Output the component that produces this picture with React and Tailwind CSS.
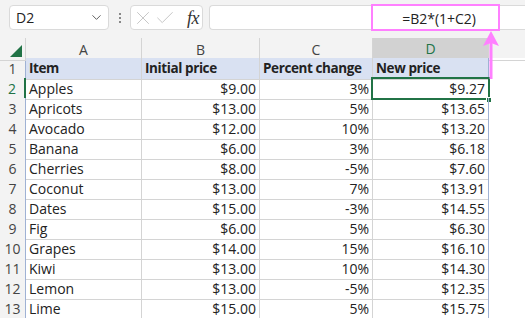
import { ChevronDown, X, Check } from 'lucide-react';

const rows = [
  ['Apples', '$9.00', '3%', '$9.27'],
  ['Apricots', '$13.00', '5%', '$13.65'],
  ['Avocado', '$12.00', '10%', '$13.20'],
  ['Banana', '$6.00', '3%', '$6.18'],
  ['Cherries', '$8.00', '-5%', '$7.60'],
  ['Coconut', '$13.00', '7%', '$13.91'],
  ['Dates', '$15.00', '-3%', '$14.55'],
  ['Fig', '$6.00', '5%', '$6.30'],
  ['Grapes', '$14.00', '15%', '$16.10'],
  ['Kiwi', '$13.00', '10%', '$14.30'],
  ['Lemon', '$13.00', '-5%', '$12.35'],
  ['Lime', '$15.00', '5%', '$15.75'],
];

const cols = 'grid grid-cols-[26px_116px_118px_113px_116px_1fr]';
const head = 'flex items-center pl-[3px] font-bold tracking-[-0.4px] text-[13.5px] bg-[#d9e1f2] border-b border-[#d4d4d4]';

const App = () => {
  return (
    <div className="relative w-[525px] h-[318px] overflow-hidden bg-white text-[14px] text-[#222] font-['Segoe_UI','Open_Sans','Noto_Sans',sans-serif]">
      {/* formula bar */}
      <div className="h-[38px] bg-[#f3f3f3] flex items-start pt-[5px] pl-[9px]">
        <div className="w-[100px] h-[25px] bg-white border border-[#dadada] rounded-[4px] flex items-center justify-between pl-[6px] pr-[4px]">
          <span>D2</span>
          <ChevronDown size={15} strokeWidth={1.5} className="text-[#555]" />
        </div>
        <div className="w-[21px] h-[25px] flex flex-col items-center justify-center gap-[2px]">
          <span className="w-[2px] h-[2px] bg-[#888]" />
          <span className="w-[2px] h-[2px] bg-[#888]" />
          <span className="w-[2px] h-[2px] bg-[#888]" />
        </div>
        <div className="w-[73px] h-[25px] bg-white border border-[#dadada] rounded-[4px] flex items-center pl-[1px] pr-[3px]">
          <X size={22} strokeWidth={0.9} className="text-[#bbb]" />
          <Check size={22} strokeWidth={0.9} className="text-[#bbb]" />
          <span className="ml-auto italic text-[18px] leading-none text-[#333] font-['Liberation_Serif',serif] tracking-[-0.5px]">fx</span>
        </div>
        <div className="ml-[6px] flex-1 h-[25px] bg-white border border-[#dadada] rounded-l-[4px] border-r-0" />
      </div>

      {/* column headers */}
      <div className={`${cols} h-[20px] bg-[#f3f3f3] text-[#444]`}>
        <div className="relative border-r border-b border-[#d4d4d4]">
          <svg className="absolute right-[3px] bottom-[3px]" width="12" height="12" viewBox="0 0 12 12">
            <polygon points="12,0 12,12 0,12" fill="#217346" />
          </svg>
        </div>
        <div className="flex items-center justify-center border-r border-b border-[#d4d4d4]">A</div>
        <div className="flex items-center justify-center border-r border-b border-[#d4d4d4]">B</div>
        <div className="flex items-center justify-center border-r border-b border-[#d4d4d4]">C</div>
        <div className="flex items-center justify-center bg-[#d2d2d2] text-[#217346] border-r border-[#d4d4d4] border-b-2 border-b-[#217346]">D</div>
        <div className="border-b border-[#d4d4d4]" />
      </div>

      {/* row 1 */}
      <div className={`${cols} h-[20px]`}>
        <div className="flex items-center justify-center bg-[#f3f3f3] text-[#444] border-r border-r-[#9fb2d4] border-b border-b-[#d4d4d4]">1</div>
        <div className={`${head} border-r`}>Item</div>
        <div className={`${head} border-r`}>Initial price</div>
        <div className={`${head} border-r`}>Percent change</div>
        <div className={`${head} border-r border-r-[#9fb2d4]`}>New price</div>
        <div />
      </div>

      {rows.map((r, i) => {
        const sel = i === 0;
        const last = i === rows.length - 1;
        const bottom = last ? 'border-b border-b-[#9fb2d4]' : 'border-b border-b-[#d4d4d4]';
        return (
          <div key={i} className={`${cols} h-[20px]`}>
            <div
              className={`flex items-center justify-center bg-[#f3f3f3] border-b border-b-[#d4d4d4] ${
                sel ? 'bg-[#d2d2d2] text-[#217346] border-r-2 border-r-[#217346]' : 'text-[#444] border-r border-r-[#9fb2d4]'
              }`}
            >
              {i + 2}
            </div>
            <div className={`flex items-center pl-[3px] border-r border-r-[#d4d4d4] ${bottom}`}>{r[0]}</div>
            <div className={`flex items-center justify-end pr-[3px] border-r border-r-[#d4d4d4] ${bottom}`}>{r[1]}</div>
            <div className={`flex items-center justify-end pr-[3px] border-r border-r-[#d4d4d4] ${bottom}`}>{r[2]}</div>
            <div className={`relative flex items-center justify-end pr-[3px] border-r border-r-[#9fb2d4] ${bottom}`}>
              {r[3]}
              {sel && (
                <>
                  <div className="absolute -left-[2px] -top-[1px] -right-[2px] -bottom-[1px] border-2 border-[#217346]" />
                  <div className="absolute -right-[4px] -bottom-[4px] w-[6px] h-[6px] bg-[#217346] border border-white" />
                </>
              )}
            </div>
            <div />
          </div>
        );
      })}

      {/* annotation */}
      <div className="absolute left-[371px] top-[4px] w-[129px] h-[27px] border-2 border-[#ff80ff]">
        <span className="absolute right-[22px] top-1/2 -translate-y-1/2">=B2*(1+C2)</span>
      </div>
      <svg className="absolute left-[482px] top-[31px]" width="18" height="48" viewBox="0 0 18 48">
        <polygon points="9,0 17,15 9,12 1,15" fill="#ff80ff" />
        <rect x="7.5" y="10" width="3" height="38" fill="#ff80ff" />
      </svg>
    </div>
  );
};

export default App;
